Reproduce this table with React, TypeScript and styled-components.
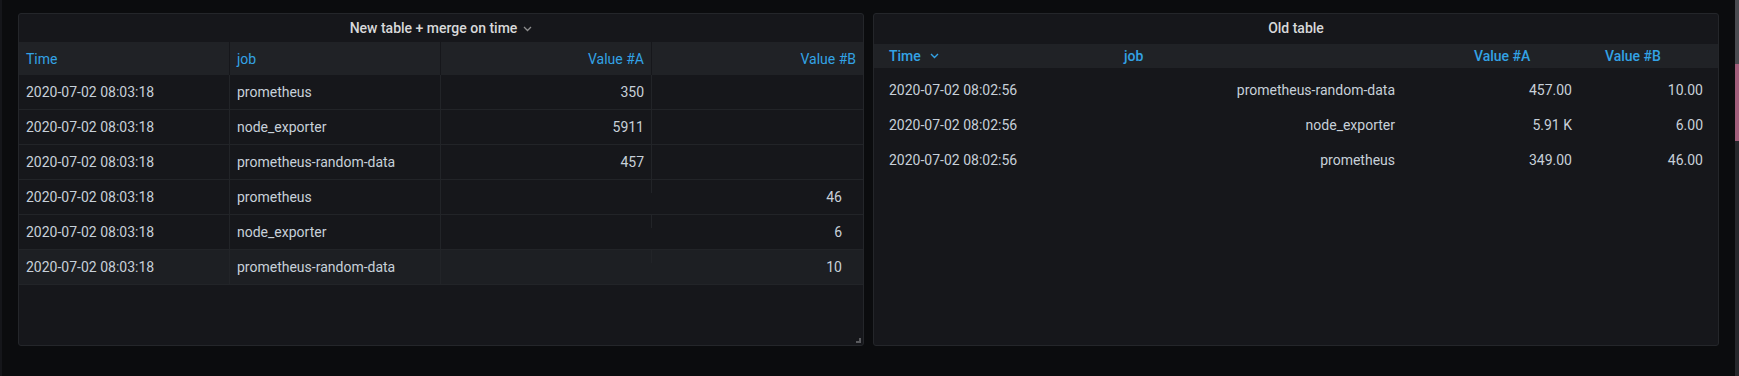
import styled, { createGlobalStyle } from "styled-components";

const GlobalStyle = createGlobalStyle`
  html, body {
    margin: 0;
    padding: 0;
    background: #0b0c0e;
    font-family: Roboto, "Noto Sans", "Liberation Sans", sans-serif;
  }
`;

const Page = styled.div`
  display: flex;
  width: 1739px;
  height: 376px;
  overflow: hidden;
  background: #0b0c0e;
`;

const LeftEdge = styled.div`
  width: 2px;
  background: #15161a;
`;

const Main = styled.div`
  display: flex;
  gap: 9px;
  padding: 13px 0 0 16px;
  align-items: flex-start;
`;

const Spacer = styled.div`
  flex: 1;
`;

const Strip = styled.div`
  width: 4px;
  display: flex;
  flex-direction: column;
  background: #27282c;
`;

const StripPart = styled.div<{ $h: number; $color: string }>`
  height: ${(p) => p.$h}px;
  background: ${(p) => p.$color};
`;

const Panel = styled.div`
  position: relative;
  width: 846px;
  height: 333px;
  box-sizing: border-box;
  background: #16171b;
  border: 1px solid #24262a;
  border-radius: 3px;
  display: flex;
  flex-direction: column;
  overflow: hidden;
`;

const TitleBar = styled.div<{ $h: number }>`
  height: ${(p) => p.$h}px;
  display: flex;
  justify-content: center;
  align-items: flex-start;
  gap: 6px;
  font-size: 14px;
  font-weight: 500;
  line-height: 28px;
  color: #d8d9da;
`;

const TitleChevron = styled.svg`
  margin-top: 12px;
`;

const Row = styled.div<{ $cols: string; $h: number; $bg?: string; $border?: boolean }>`
  display: grid;
  grid-template-columns: ${(p) => p.$cols};
  height: ${(p) => p.$h}px;
  background: ${(p) => p.$bg || "transparent"};
  border-bottom: ${(p) => (p.$border ? "1px solid #222428" : "none")};
`;

const HeadCell = styled.div<{ $right?: boolean; $divider?: boolean; $bold?: boolean }>`
  display: flex;
  align-items: center;
  justify-content: ${(p) => (p.$right ? "flex-end" : "flex-start")};
  gap: 9px;
  padding: 0 7px;
  font-size: 14px;
  font-weight: ${(p) => (p.$bold ? 500 : 400)};
  color: #33a2e5;
  border-right: ${(p) => (p.$divider ? "1px solid #16171b" : "none")};
  white-space: nowrap;
`;

const Cell = styled.div<{ $right?: boolean; $divider?: boolean; $empty?: boolean; $pr?: number; $pl?: number }>`
  display: flex;
  align-items: center;
  justify-content: ${(p) => (p.$right ? "flex-end" : "flex-start")};
  align-self: ${(p) => (p.$empty ? "start" : "stretch")};
  height: ${(p) => (p.$empty ? "13px" : "auto")};
  padding: 0 ${(p) => p.$pr ?? 7}px 0 ${(p) => p.$pl ?? 7}px;
  font-size: 14px;
  color: #c7d0d9;
  border-right: ${(p) => (p.$divider ? "1px solid #222428" : "none")};
  white-space: nowrap;
`;

const OldHeadCell = styled(HeadCell)`
  padding: 0 0 0 15px;
`;

const OldBody = styled.div`
  margin-top: 4px;
`;

const ResizeHandle = styled.svg`
  position: absolute;
  right: 2px;
  bottom: 2px;
`;

const Chevron = ({ color, w = 9 }: { color: string; w?: number }) => (
  <svg width={w} height="6" viewBox="0 0 9 6">
    <polyline points="1,1 4.5,4.5 8,1" fill="none" stroke={color} strokeWidth="1.4" />
  </svg>
);

const newRows = [
  { job: "prometheus", a: "350", b: "" },
  { job: "node_exporter", a: "5911", b: "" },
  { job: "prometheus-random-data", a: "457", b: "" },
  { job: "prometheus", a: "", b: "46" },
  { job: "node_exporter", a: "", b: "6" },
  { job: "prometheus-random-data", a: "", b: "10" },
];

const oldRows = [
  { job: "prometheus-random-data", a: "457.00", b: "10.00" },
  { job: "node_exporter", a: "5.91 K", b: "6.00" },
  { job: "prometheus", a: "349.00", b: "46.00" },
];

const NEW_COLS = "repeat(4, 1fr)";
const OLD_HEAD_COLS = "235px 350px 131px 128px";
const OLD_BODY_COLS = "234px 302px 177px 131px";

const App = () => {
  return (
    <>
      <GlobalStyle />
      <Page>
        <LeftEdge />
        <Main>
          <Panel>
            <TitleBar $h={28}>
              <span>New table + merge on time</span>
              <TitleChevron width="9" height="6" viewBox="0 0 9 6">
                <polyline points="1,1 4.5,4.5 8,1" fill="none" stroke="#8e8e8e" strokeWidth="1.3" />
              </TitleChevron>
            </TitleBar>
            <Row $cols={NEW_COLS} $h={33} $bg="#202226">
              <HeadCell $divider>Time</HeadCell>
              <HeadCell $divider>job</HeadCell>
              <HeadCell $divider $right>Value #A</HeadCell>
              <HeadCell $right>Value #B</HeadCell>
            </Row>
            {newRows.map((r, i) => (
              <Row
                key={i}
                $cols={NEW_COLS}
                $h={34}
                $border
                $bg={i === newRows.length - 1 ? "#1d1f23" : undefined}
              >
                <Cell $divider>2020-07-02 08:03:18</Cell>
                <Cell $divider>{r.job}</Cell>
                <Cell $divider $right $empty={!r.a}>{r.a}</Cell>
                <Cell $right $empty={!r.b} $pr={21}>{r.b}</Cell>
              </Row>
            ))}
            <ResizeHandle width="5" height="5" viewBox="0 0 5 5">
              <path d="M5 0 V5 H0 V3 H3 V0 Z" fill="#5a5b5f" />
            </ResizeHandle>
          </Panel>

          <Panel>
            <TitleBar $h={30}>
              <span>Old table</span>
            </TitleBar>
            <Row $cols={OLD_HEAD_COLS} $h={24} $bg="#202226">
              <OldHeadCell $bold>
                Time <Chevron color="#33a2e5" />
              </OldHeadCell>
              <OldHeadCell $bold>job</OldHeadCell>
              <OldHeadCell $bold>Value #A</OldHeadCell>
              <OldHeadCell $bold>Value #B</OldHeadCell>
            </Row>
            <OldBody>
              {oldRows.map((r, i) => (
                <Row key={i} $cols={OLD_BODY_COLS} $h={35}>
                  <Cell $pl={15}>2020-07-02 08:02:56</Cell>
                  <Cell $right $pr={15}>{r.job}</Cell>
                  <Cell $right $pr={15}>{r.a}</Cell>
                  <Cell $right $pr={15}>{r.b}</Cell>
                </Row>
              ))}
            </OldBody>
          </Panel>
        </Main>
        <Spacer />
        <Strip>
          <StripPart $h={64} $color="#4b4c51" />
          <StripPart $h={77} $color="#a35f7c" />
        </Strip>
      </Page>
    </>
  );
};

export default App;
